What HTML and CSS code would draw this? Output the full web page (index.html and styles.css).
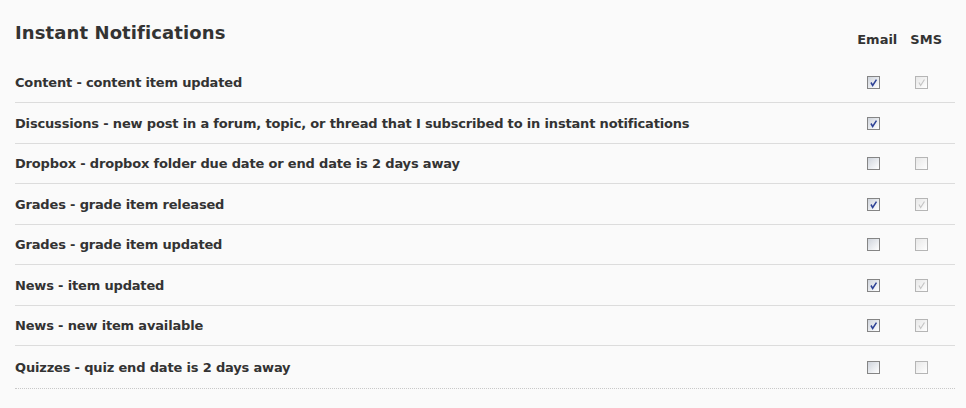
FILE: index.html
```html
<!DOCTYPE html>
<html lang="en">
<head>
  <meta charset="UTF-8">
  <title>Instant Notifications</title>
  <link rel="stylesheet" href="styles.css">
</head>
<body>
  <section class="notifications">
    <div class="head">
      <h2 class="title">Instant Notifications</h2>
      <div class="cols">
        <span>Email</span>
        <span>SMS</span>
      </div>
    </div>

    <div class="row">
      <span class="label">Content - content item updated</span>
      <span class="cell"><span class="box checked"><svg viewBox="0 0 13 13"><path d="M3.5 6.5 L5.5 10 L10 3"/></svg></span></span>
      <span class="cell"><span class="box disabled checked"><svg viewBox="0 0 13 13"><path d="M3.5 6.5 L5.5 10 L10 3"/></svg></span></span>
    </div>
    <div class="row">
      <span class="label">Discussions - new post in a forum, topic, or thread that I subscribed to in instant notifications</span>
      <span class="cell"><span class="box checked"><svg viewBox="0 0 13 13"><path d="M3.5 6.5 L5.5 10 L10 3"/></svg></span></span>
      <span class="cell"></span>
    </div>
    <div class="row">
      <span class="label">Dropbox - dropbox folder due date or end date is 2 days away</span>
      <span class="cell"><span class="box"></span></span>
      <span class="cell"><span class="box disabled"></span></span>
    </div>
    <div class="row">
      <span class="label">Grades - grade item released</span>
      <span class="cell"><span class="box checked"><svg viewBox="0 0 13 13"><path d="M3.5 6.5 L5.5 10 L10 3"/></svg></span></span>
      <span class="cell"><span class="box disabled checked"><svg viewBox="0 0 13 13"><path d="M3.5 6.5 L5.5 10 L10 3"/></svg></span></span>
    </div>
    <div class="row">
      <span class="label">Grades - grade item updated</span>
      <span class="cell"><span class="box"></span></span>
      <span class="cell"><span class="box disabled"></span></span>
    </div>
    <div class="row">
      <span class="label">News - item updated</span>
      <span class="cell"><span class="box checked"><svg viewBox="0 0 13 13"><path d="M3.5 6.5 L5.5 10 L10 3"/></svg></span></span>
      <span class="cell"><span class="box disabled checked"><svg viewBox="0 0 13 13"><path d="M3.5 6.5 L5.5 10 L10 3"/></svg></span></span>
    </div>
    <div class="row">
      <span class="label">News - new item available</span>
      <span class="cell"><span class="box checked"><svg viewBox="0 0 13 13"><path d="M3.5 6.5 L5.5 10 L10 3"/></svg></span></span>
      <span class="cell"><span class="box disabled checked"><svg viewBox="0 0 13 13"><path d="M3.5 6.5 L5.5 10 L10 3"/></svg></span></span>
    </div>
    <div class="row last">
      <span class="label">Quizzes - quiz end date is 2 days away</span>
      <span class="cell"><span class="box"></span></span>
      <span class="cell"><span class="box disabled"></span></span>
    </div>
  </section>
</body>
</html>
```

FILE: styles.css
```css
* {
  margin: 0;
  padding: 0;
  box-sizing: border-box;
}

body {
  background-color: #fafafa;
  color: #333;
  font-family: "DejaVu Sans", Verdana, sans-serif;
  font-weight: bold;
  padding: 0 11px 0 15px;
}

.notifications {
  width: 940px;
}

.head {
  display: flex;
  justify-content: space-between;
  height: 62.5px;
}

.title {
  font-size: 18px;
  font-weight: bold;
  padding-top: 21px;
  line-height: 24px;
  letter-spacing: 0.1px;
}

.cols {
  display: flex;
  gap: 13px;
  padding-top: 32px;
  padding-right: 13px;
  font-size: 13px;
  line-height: 16px;
}

.row {
  display: grid;
  grid-template-columns: 1fr 48px 48px 10px;
  align-items: center;
  height: 40.5px;
  border-bottom: 1px solid #dcdcdc;
  font-size: 13px;
  letter-spacing: -0.17px;
}

.row.last {
  border-bottom: 1px dotted #c8c8c8;
  height: 43px;
}

.label {
  line-height: 16px;
  padding-top: 2px;
}

.cell {
  display: flex;
  justify-content: center;
  padding-top: 1px;
}

.box {
  display: block;
  width: 13px;
  height: 13px;
  border: 1px solid #858585;
  background: linear-gradient(135deg, #cfd4dc 0%, #eef0f3 65%, #ffffff 100%);
}

.box.disabled {
  border-color: #b5b5b5;
  background: linear-gradient(135deg, #e8e8e8 0%, #f6f6f6 65%, #ffffff 100%);
}

.box svg {
  display: block;
  width: 11px;
  height: 11px;
}

.box path {
  fill: none;
  stroke: #2e4296;
  stroke-width: 1.8;
}

.box.disabled path {
  stroke: #c4c4c4;
  stroke-width: 1.4;
}
```
